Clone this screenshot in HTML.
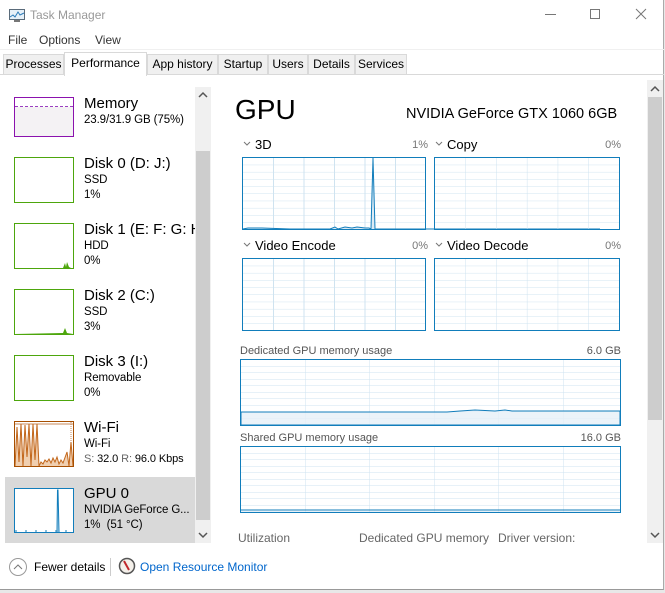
<!DOCTYPE html>
<html><head><meta charset="utf-8">
<style>
*{margin:0;padding:0;box-sizing:border-box}
body{width:665px;height:593px;overflow:hidden;background:#e8e8e8;font-family:"Liberation Sans",sans-serif;position:relative}
.win{position:absolute;left:0;top:0;width:664px;height:590px;background:#fff;border-right:1px solid #aaa;border-bottom:1px solid #999}
.a{position:absolute;white-space:nowrap}
.tab{position:absolute;top:54px;height:21px;background:#f0f0f0;border:1px solid #d9d9d9;font-size:12px;line-height:19px;text-align:center;color:#000}
.thumb{position:absolute;left:14px;width:60px;background:#fff}
.t1{font-size:15px;color:#000}
.t2{font-size:11.5px;color:#000;letter-spacing:-0.1px}
</style></head><body>
<div class="win">
<svg class="a" style="left:8px;top:8px" width="18" height="15" viewBox="0 0 18 15"><rect x="1.5" y="1.5" width="15" height="10" fill="#e6f0f8" stroke="#5a6b7a"/><polyline points="2,9 5,7 7,9 10,4 12,7 16,5" fill="none" stroke="#2a7ab8" stroke-width="1"/><rect x="6" y="12" width="6" height="2" fill="#777"/></svg>
<div class="a" style="left:30px;top:8px;font-size:12px;color:#999">Task Manager</div>
<div class="a" style="left:545px;top:14px;width:11px;height:1px;background:#777"></div>
<div class="a" style="left:590px;top:9px;width:10px;height:10px;border:1px solid #777"></div>
<svg class="a" style="left:635px;top:8px" width="12" height="12"><path d="M1 1L11 11M11 1L1 11" stroke="#777" stroke-width="1"/></svg>
<div class="a" style="left:8px;top:33px;font-size:12px;color:#333">File</div>
<div class="a" style="left:39px;top:33px;font-size:12px;color:#333">Options</div>
<div class="a" style="left:95px;top:33px;font-size:12px;color:#333">View</div>
<div class="a" style="left:0;top:49px;width:664px;height:1px;background:#f0f0f0"></div>
<div class="a" style="left:0;top:74px;width:664px;height:1px;background:#d9d9d9"></div>
<div class="tab" style="left:3px;width:61px">Processes</div>
<div class="tab" style="left:64px;width:83px;top:52px;height:24px;background:#fff;border-bottom:none;line-height:20px">Performance</div>
<div class="tab" style="left:147px;width:71px">App history</div>
<div class="tab" style="left:218px;width:50px">Startup</div>
<div class="tab" style="left:268px;width:40px">Users</div>
<div class="tab" style="left:308px;width:47px">Details</div>
<div class="tab" style="left:355px;width:52px">Services</div>

<div class="a" style="left:5px;top:477px;width:190px;height:66px;background:#d9d9d9"></div>
<div class="a" style="left:195px;top:87px;width:16px;height:456px;background:#f0f0f0"></div>
<div class="a" style="left:196px;top:151px;width:14px;height:369px;background:#cdcdcd"></div>
<svg class="a" style="left:197px;top:90px" width="12" height="10"><path d="M2 7L6 3L10 7" fill="none" stroke="#555" stroke-width="1.5"/></svg>
<svg class="a" style="left:197px;top:530px" width="12" height="10"><path d="M2 3L6 7L10 3" fill="none" stroke="#555" stroke-width="1.5"/></svg>

<div class="thumb" style="top:97px;height:40px;border:1px solid #8b12ae;background:#f4f2f4"></div>
<div class="a" style="left:15px;top:98px;width:58px;height:9px;background:#fff;border-bottom:1px dashed #9a3fc0"></div>
<div class="a t1" style="left:84px;top:95px">Memory</div>
<div class="a t2" style="left:84px;top:114px">23.9/31.9 GB (75%)</div>
<div class="thumb" style="top:157px;height:46px;border:1px solid #4da60c"></div>
<div class="a t1" style="left:84px;top:155px">Disk 0 (D: J:)</div>
<div class="a t2" style="left:84px;top:174px">SSD</div>
<div class="a t2" style="left:84px;top:189px">1%</div>
<div class="thumb" style="top:223px;height:46px;border:1px solid #4da60c"></div>
<svg class="a" style="left:63px;top:260px" width="8" height="8"><path d="M0 8L2 3L3 7L4 2L6 7L8 8Z" fill="#4da60c"/></svg>
<div class="a t1" style="left:84px;top:221px;width:111px;overflow:hidden">Disk 1 (E: F: G: H</div>
<div class="a t2" style="left:84px;top:240px">HDD</div>
<div class="a t2" style="left:84px;top:255px">0%</div>
<div class="thumb" style="top:289px;height:46px;border:1px solid #4da60c"></div>
<svg class="a" style="left:15px;top:325px" width="58" height="9"><path d="M0 9L48 8L50 3L52 8L58 9Z" fill="#4da60c"/></svg>
<div class="a t1" style="left:84px;top:287px">Disk 2 (C:)</div>
<div class="a t2" style="left:84px;top:306px">SSD</div>
<div class="a t2" style="left:84px;top:321px">3%</div>
<div class="thumb" style="top:355px;height:46px;border:1px solid #4da60c"></div>
<div class="a t1" style="left:84px;top:353px">Disk 3 (I:)</div>
<div class="a t2" style="left:84px;top:372px">Removable</div>
<div class="a t2" style="left:84px;top:387px">0%</div>
<div class="thumb" style="top:421px;height:46px;border:1px solid #a74f01"></div>
<svg class="a" style="left:15px;top:422px" width="58" height="44"><path d="M0 2H58" stroke="#c98a5a" stroke-width="1"/><path d="M56 0V44" stroke="#c98a5a" stroke-dasharray="1,1"/><polyline points="0,44 2,5 4,40 6,2 8,44 10,3 12,35 14,2 16,44 18,2 20,38 22,2 24,44 26,40 28,42 30,38 32,40 34,37 36,41 38,36 40,40 42,35 44,42 46,38 48,41 52,30 54,44 56,20 58,44" fill="#f0cfb0" stroke="#c2661a" stroke-width="1"/></svg>
<div class="a t1" style="left:84px;top:419px">Wi-Fi</div>
<div class="a t2" style="left:84px;top:438px">Wi-Fi</div>
<div class="a t2" style="left:84px;top:453px;font-size:11px"><span style="color:#666">S:</span> 32.0 <span style="color:#666">R:</span> 96.0 Kbps</div>
<div class="thumb" style="top:488px;height:45px;border:1px solid #117dbb"></div>
<svg class="a" style="left:15px;top:489px" width="58" height="43"><path d="M42 43L42.5 1L43 1L44 43" fill="#cde3f1" stroke="#117dbb"/><path d="M0 42H58" stroke="#117dbb" stroke-dasharray="2,8"/></svg>
<div class="a t1" style="left:84px;top:485px">GPU 0</div>
<div class="a t2" style="left:84px;top:504px">NVIDIA GeForce G...</div>
<div class="a t2" style="left:84px;top:519px">1%&nbsp; (51 °C)</div>

<div class="a" style="left:647px;top:80px;width:16px;height:463px;background:#f0f0f0"></div>
<div class="a" style="left:648px;top:97px;width:14px;height:323px;background:#cdcdcd"></div>
<svg class="a" style="left:649px;top:84px" width="12" height="10"><path d="M2 7L6 3L10 7" fill="none" stroke="#555" stroke-width="1.5"/></svg>
<svg class="a" style="left:649px;top:530px" width="12" height="10"><path d="M2 3L6 7L10 3" fill="none" stroke="#555" stroke-width="1.5"/></svg>

<div class="a" style="left:235px;top:94px;font-size:28px;color:#000">GPU</div>
<div class="a" style="left:406px;top:106px;font-size:14.5px;color:#000">NVIDIA GeForce GTX 1060 6GB</div>

<svg class="a" style="left:0;top:0" width="647" height="545">
<defs>
<pattern id="g" x="243" y="158" width="30.5" height="7.2" patternUnits="userSpaceOnUse"><path d="M30.5 0V7.2M0 7.2H30.5" stroke="#cfe3f0" fill="none"/></pattern>
<pattern id="g2" x="435" y="158" width="30.8" height="7.2" patternUnits="userSpaceOnUse"><path d="M30.8 0V7.2M0 7.2H30.8" stroke="#cfe3f0" fill="none"/></pattern>
<pattern id="g3" x="243" y="259" width="30.5" height="7.2" patternUnits="userSpaceOnUse"><path d="M30.5 0V7.2M0 7.2H30.5" stroke="#cfe3f0" fill="none"/></pattern>
<pattern id="g4" x="435" y="259" width="30.8" height="7.2" patternUnits="userSpaceOnUse"><path d="M30.8 0V7.2M0 7.2H30.8" stroke="#cfe3f0" fill="none"/></pattern>
<pattern id="g5" x="241" y="360" width="64.5" height="6.5" patternUnits="userSpaceOnUse"><path d="M64.5 0V6.5M0 6.5H64.5" stroke="#cfe3f0" fill="none"/></pattern>
<pattern id="g6" x="241" y="447" width="64.5" height="6.5" patternUnits="userSpaceOnUse"><path d="M64.5 0V6.5M0 6.5H64.5" stroke="#cfe3f0" fill="none"/></pattern>
</defs>
<g font-family="Liberation Sans,sans-serif">
<path d="M244 142L247 145L250 142" fill="none" stroke="#777"/>
<text x="255" y="149" font-size="13">3D</text>
<text x="428" y="148" font-size="11" fill="#777" text-anchor="end">1%</text>
<path d="M436 142L439 145L442 142" fill="none" stroke="#777"/>
<text x="447" y="149" font-size="13">Copy</text>
<text x="621" y="148" font-size="11" fill="#777" text-anchor="end">0%</text>
<path d="M244 243L247 246L250 243" fill="none" stroke="#777"/>
<text x="255" y="250" font-size="13">Video Encode</text>
<text x="428" y="249" font-size="11" fill="#777" text-anchor="end">0%</text>
<path d="M436 243L439 246L442 243" fill="none" stroke="#777"/>
<text x="447" y="250" font-size="13">Video Decode</text>
<text x="621" y="249" font-size="11" fill="#777" text-anchor="end">0%</text>
<text x="240" y="354" font-size="11" fill="#555">Dedicated GPU memory usage</text>
<text x="621" y="354" font-size="11" fill="#555" text-anchor="end">6.0 GB</text>
<text x="240" y="441" font-size="11" fill="#555">Shared GPU memory usage</text>
<text x="621" y="441" font-size="11" fill="#555" text-anchor="end">16.0 GB</text>
<text x="238" y="542" font-size="12" fill="#666">Utilization</text>
<text x="359" y="542" font-size="12" fill="#666">Dedicated GPU memory</text>
<text x="498" y="542" font-size="12" fill="#666">Driver version:</text>
</g>
<rect x="242.5" y="157.5" width="183" height="72" fill="url(#g)" stroke="#117dbb"/>
<path d="M243 229L248 228L255 228L262 228L290 229L330 229L335 227L338 229L345 227L352 228L357 227L365 228L369 228L371 229L373 158L375 229L600 229" fill="#dceaf4" stroke="#117dbb"/>
<rect x="434.5" y="157.5" width="185" height="72" fill="url(#g2)" stroke="#117dbb"/>
<rect x="242.5" y="258.5" width="183" height="72" fill="url(#g3)" stroke="#117dbb"/>
<rect x="434.5" y="258.5" width="185" height="72" fill="url(#g4)" stroke="#117dbb"/>
<rect x="240.5" y="359.5" width="380" height="66" fill="url(#g5)" stroke="#117dbb"/>
<path d="M241 412L447 412L460 411L475 410L495 411L505 410L512 411L560 411L580 411L620 411L620 425L241 425Z" fill="#e6f0f8" fill-opacity="0.8" stroke="#117dbb"/>
<rect x="240.5" y="446.5" width="380" height="66" fill="url(#g6)" stroke="#117dbb"/>
<path d="M241 510H620" stroke="#117dbb"/>
</svg>

<svg class="a" style="left:8px;top:557px" width="20" height="20"><circle cx="10" cy="10" r="8.5" fill="#fff" stroke="#999"/><path d="M6 12L10 8L14 12" fill="none" stroke="#777"/></svg>
<div class="a" style="left:34px;top:560px;font-size:12px;color:#000">Fewer details</div>
<div class="a" style="left:110px;top:558px;width:1px;height:18px;background:#ccc"></div>
<svg class="a" style="left:118px;top:557px" width="18" height="18"><circle cx="9" cy="9" r="7.5" fill="#f4f0ea" stroke="#555" stroke-width="1.5"/><path d="M6 4L11 13" stroke="#c0282c" stroke-width="2"/></svg>
<div class="a" style="left:140px;top:560px;font-size:12px;color:#0066cc">Open Resource Monitor</div>
</div>
</body></html>
